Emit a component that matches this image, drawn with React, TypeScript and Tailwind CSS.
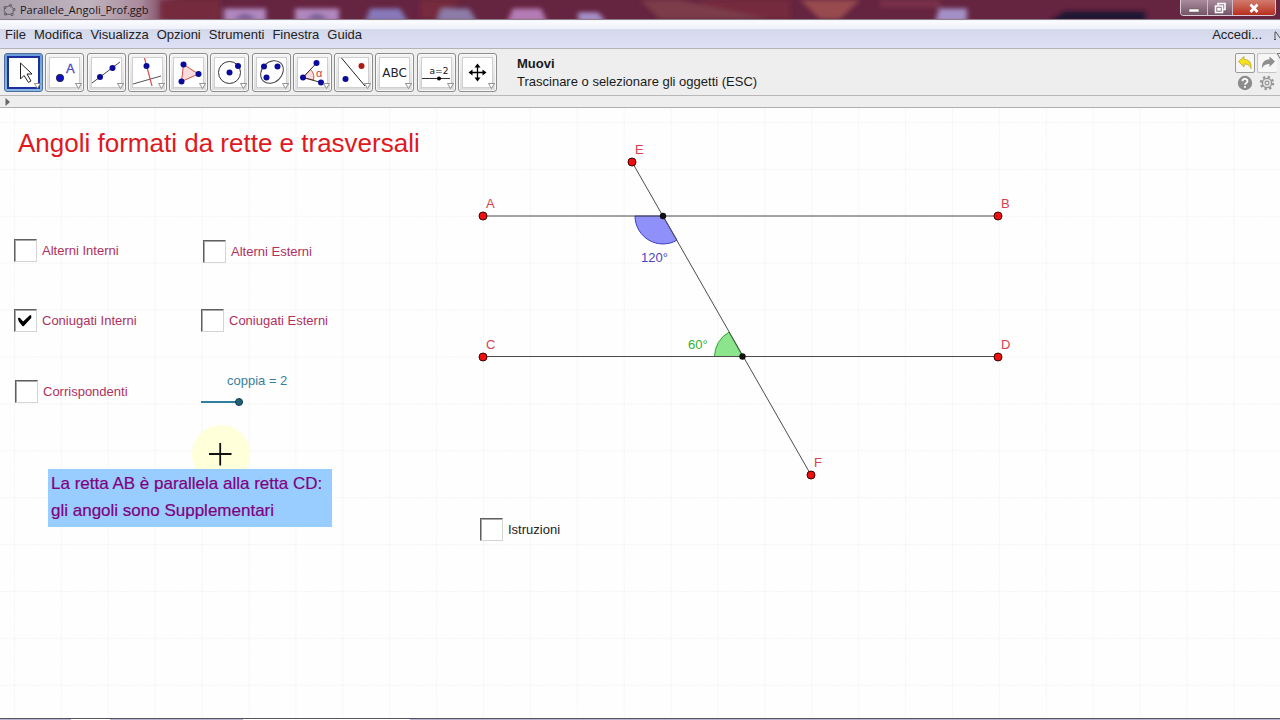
import { useState } from 'react'
import type { ReactNode } from 'react'

const BLUE = '#0b0b9a'

const Dot = ({ x, y, fill = BLUE, r = 3 }: { x: number; y: number; fill?: string; r?: number }) => (
  <circle cx={x} cy={y} r={r} fill={fill} />
)

const tools: { name: string; icon: ReactNode }[] = [
  {
    name: 'Muovi',
    icon: <path d="M11.5 5v16l3.5-3.500 4.500 7 2.500-1.500-4-7h5z" fill="#fff" stroke="#222" />,
  },
  {
    name: 'Punto',
    icon: (
      <>
        <circle cx="10" cy="20" r="3.700" fill="#1010c8" stroke="#222" strokeWidth="0.800" />
        <text x="16" y="15" fontSize="13" fill="#4a44c8" stroke="#4a44c8" strokeWidth="0.300">A</text>
      </>
    ),
  },
  {
    name: 'Retta',
    icon: (
      <>
        <path d="M0 25 28 4" stroke="#444" />
        <Dot x={8} y={19} />
        <Dot x={20.5} y={10} />
      </>
    ),
  },
  {
    name: 'Retta perpendicolare',
    icon: (
      <>
        <path d="M0 26 28 18" stroke="#555" />
        <path d="M11.500 0 19 28" stroke="#d8504c" strokeWidth="1.200" />
        <Dot x={13.5} y={8} />
      </>
    ),
  },
  {
    name: 'Poligono',
    icon: (
      <>
        <path d="M9.500 6.500 24.500 16 7.500 23.500z" fill="#fbdcdc" stroke="#d0504c" />
        <Dot x={9.5} y={6.5} />
        <Dot x={24.5} y={16} />
        <Dot x={7.5} y={23.5} />
      </>
    ),
  },
  {
    name: 'Circonferenza',
    icon: (
      <>
        <circle cx="14.500" cy="14.500" r="11" fill="none" stroke="#333" />
        <Dot x={14.5} y={14.5} />
        <Dot x={23} y={8} />
      </>
    ),
  },
  {
    name: 'Conica',
    icon: (
      <>
        <ellipse cx="15" cy="14" rx="12.500" ry="10" transform="rotate(-45 15 14)" fill="none" stroke="#444" />
        <Dot x={7} y={8.5} />
        <Dot x={20.5} y={8.5} />
        <Dot x={9.5} y={19.5} />
      </>
    ),
  },
  {
    name: 'Angolo',
    icon: (
      <>
        <path d="M5 19.500 12.500 11.500A11 11 0 0 1 15.500 22z" fill="#fbdcdc" stroke="#d0504c" />
        <path d="M18.500 5 5 19.500 23 24.500" fill="none" stroke="#333" />
        <Dot x={5} y={19.5} />
        <Dot x={18.5} y={5} />
        <Dot x={23} y={24.5} />
        <text x="18" y="19" fontSize="11" fill="#d0403c">α</text>
      </>
    ),
  },
  {
    name: 'Simmetria',
    icon: (
      <>
        <path d="M2.500 0 26 28" stroke="#222" />
        <Dot x={22.5} y={8} fill="#b01818" />
        <Dot x={6.5} y={21} />
      </>
    ),
  },
  {
    name: 'Testo',
    icon: (
      <text x="14.500" y="18.500" fontSize="12" textAnchor="middle" fill="#223" className="font-['DejaVu_Sans',sans-serif]">ABC</text>
    ),
  },
  {
    name: 'Slider',
    icon: (
      <>
        <text x="17" y="16" fontSize="9" textAnchor="middle" fill="#111" className="font-['DejaVu_Sans',sans-serif]">a=2</text>
        <path d="M0 20.500H28" stroke="#333" />
        <Dot x={17} y={20.5} r={2} fill="#000" />
      </>
    ),
  },
  {
    name: 'Muovi vista',
    icon: (
      <>
        <path d="M14.500 8v13M8 14.500h13" stroke="#000" strokeWidth="1.300" />
        <path d="M14.500 5.500 17.500 9.500h-6zM14.500 23.500 17.500 19.500h-6zM5.500 14.500 9.500 11.500v6zM23.500 14.500 19.500 11.500v6z" />
      </>
    ),
  },
]

const ToolButton = ({ name, active, onClick, children }: { name: string; active: boolean; onClick: () => void; children: ReactNode }) => (
  <button
    type="button"
    aria-label={name}
    onClick={onClick}
    className={
      active
        ? 'relative flex size-[39px] items-center justify-center rounded-[3px] border border-[#4d6f9c] bg-linear-to-b from-[#6d9fd6] to-[#8ab8e4]'
        : 'relative flex size-[39px] items-center justify-center rounded-[3px] border border-[#8c8c8c] bg-linear-to-b from-[#f4f4f4] to-[#dcdcdc] shadow-[inset_0_0_0_1px_#fafafa]'
    }
  >
    <span className={active ? 'block border-2 border-[#1b2f9e] bg-white' : 'block border border-[#cfcfcf] bg-white'}>
      <svg viewBox="0 0 29 29" className="block size-[29px] font-['Liberation_Sans',sans-serif]">
        {children}
      </svg>
    </span>
    <svg viewBox="0 0 7 6" className="absolute right-px bottom-0.5 h-[6px] w-[7px]">
      <path d="M.5.500h6L3.500 5.500z" fill="#fff" stroke="#777" strokeWidth="0.800" />
    </svg>
  </button>
)

const TitleBar = () => (
  <header className="relative flex h-5 items-start justify-between overflow-hidden border-b border-[#8d7f8c] bg-[#652440]">
    {/* desktop showing through the glass frame */}
    <svg className="absolute inset-0 h-full w-full" preserveAspectRatio="none" viewBox="0 0 1280 20">
      <defs>
        <filter id="glass" x="-20%" y="-50%" width="140%" height="200%">
          <feGaussianBlur stdDeviation="2.500" />
        </filter>
        <linearGradient id="haze">
          <stop offset="0" stopColor="#aba3ae" />
          <stop offset="0.500" stopColor="#c0b3bd" />
          <stop offset="0.780" stopColor="#a98a9c" />
          <stop offset="1" stopColor="#652440" />
        </linearGradient>
      </defs>
      <rect width="180" height="20" fill="url(#haze)" />
      <g filter="url(#glass)">
        <path d="M160 0h60v22h-60zM420 0h40l-20 20h-20zM700 0h90v20h-80z" fill="#76293c" />
        <path d="M640 0h40l90 20H660z" fill="#7c3c48" />
        <path d="M800 0h60l-20 20h-20z" fill="#984c50" />
        <path d="M880 0h60v8h-60z" fill="#7a3048" />
        <path d="M1065 12h80v10h-96z" fill="#1f1230" />
        <path d="M224 9h42v14h-42zM295 9h44v14h-44z" fill="#b088be" />
        <path d="M234 20q11-10 22 0zM306 20q11-10 22 0z" fill="#66508c" />
        <path d="M370 9h30l8 14h-43z" fill="#8678ba" />
        <path d="M441 9h28l8 14h-40z" fill="#8c7ca8" />
        <path d="M513 9h28l6 14h-40z" fill="#b47cb4" />
        <path d="M578 13h20l8 10h-28zM939 9h28v14h-32z" fill="#a490c8" />
      </g>
    </svg>
    <div className="relative flex h-5 items-center gap-1 pl-0.5">
      <svg viewBox="0 0 14 14" className="size-3.5" fill="none" stroke="#55505c">
        <path d="M3 4.500 8 2.500 12 6 10.500 11 4.500 11.500 2 8z" strokeWidth="0.800" />
        <g fill="#8d8994" strokeWidth="0.700">
          <circle cx="3" cy="4.500" r="1.200" />
          <circle cx="8.500" cy="2.500" r="1.200" />
          <circle cx="12" cy="6.500" r="1.200" />
          <circle cx="10" cy="11.500" r="1.200" />
          <circle cx="3.500" cy="11" r="1.200" />
        </g>
      </svg>
      <h1 className="font-['Open_Sans',sans-serif] text-[11px] text-[#1c1820]">Parallele_Angoli_Prof.ggb</h1>
    </div>
    <div className="relative mr-1 flex h-4 overflow-hidden rounded-b-[4px] border border-t-0 border-[#d8cdd6]">
      <button type="button" aria-label="Riduci" className="flex w-[27px] items-center justify-center border-r border-[#cdbcc8] bg-linear-to-b from-[#a98c9c] to-[#755568]">
        <svg viewBox="0 0 12 12" className="size-3"><path d="M1 7h10v3H1z" fill="#fff" stroke="#655" strokeWidth="0.500" /></svg>
      </button>
      <button type="button" aria-label="Ripristina" className="flex w-[25px] items-center justify-center border-r border-[#cdbcc8] bg-linear-to-b from-[#a98c9c] to-[#755568]">
        <svg viewBox="0 0 12 12" className="size-3" fill="none" stroke="#fff" strokeWidth="1.600"><path d="M4 3V1.500h7v6H9.500M1.500 4h7v6.500h-7zM4 6.500h2v1.500H4z" /></svg>
      </button>
      <button type="button" aria-label="Chiudi" className="flex w-[42px] items-center justify-center bg-linear-to-b from-[#d07a6e] to-[#b82c1c]">
        <svg viewBox="0 0 12 12" className="size-3" stroke="#fff" strokeWidth="2.600"><path d="M2.500 2.500 9.500 10M9.500 2.500 2.500 10" /></svg>
      </button>
    </div>
  </header>
)

const menus = ['File', 'Modifica', 'Visualizza', 'Opzioni', 'Strumenti', 'Finestra', 'Guida']

const MenuBar = () => (
  <nav className="flex h-7 items-center justify-between overflow-hidden border-b border-[#b4b4b8] bg-[linear-gradient(#fbfcff_0%,#eef1fa_28%,#d3d9ea_32%,#dfe0f6_100%)] pl-[5px] text-[13px] text-[#222]">
    <div className="flex gap-2">
      {menus.map((menu) => (
        <button type="button" key={menu}>{menu}</button>
      ))}
    </div>
    <div className="flex items-center gap-3">
      <button type="button">Accedi...</button>
      <svg viewBox="0 0 6 10" className="h-2.5 w-1.5" fill="none" stroke="#555"><path d="M0 9.500h2M1 9V2h1l4 6" /></svg>
    </div>
  </nav>
)

const Toolbar = () => {
  const [tool, setTool] = useState('Muovi')
  return (
    <div className="flex h-[47px] items-center justify-between border-b border-[#b8b8b8] bg-[#eeeeee] pl-1">
      <div className="flex items-center gap-5">
        <div className="flex w-[493px] justify-between">
          {tools.map(({ name, icon }) => (
            <ToolButton key={name} name={name} active={tool === name} onClick={() => setTool(name)}>
              {icon}
            </ToolButton>
          ))}
        </div>
        <div className="pt-0.5 text-[13px] leading-[18px] text-[#1a1a1a]">
          <p className="font-bold">Muovi</p>
          <p>Trascinare o selezionare gli oggetti (ESC)</p>
        </div>
      </div>
      <div className="flex items-start">
        <div className="grid grid-cols-2 items-center justify-items-center gap-x-0.5 gap-y-0.5">
          <button type="button" aria-label="Annulla" className="flex size-5 items-center justify-center rounded-xs border border-[#9a9a9a] bg-[#f6f6f6]">
            <svg viewBox="0 0 16 16" className="size-4"><path d="M1.500 6.500 7 1.500v3c5 0 7.500 3 7 9-1.500-3.500-3.500-4.500-7-4.500v3z" fill="#f6e21c" stroke="#b9a52c" strokeWidth="0.800" /></svg>
          </button>
          <button type="button" aria-label="Ripeti" className="flex size-5 items-center justify-center rounded-xs border border-r-0 border-[#c4c4c4] bg-[#f6f6f6]">
            <svg viewBox="0 0 16 16" className="size-4"><path d="M15 6.500 9.500 1.500v3c-5 0-8 3-7.500 9 1.500-3.500 4-4.500 7.500-4.500v3z" fill="#8e8e8e" /></svg>
          </button>
          <button type="button" aria-label="Guida">
            <svg viewBox="0 0 16 16" className="block size-4">
              <circle cx="8" cy="8" r="7.200" fill="#8c8c8c" />
              <path d="M5.500 6.300C5.500 3.200 10.500 3.200 10.500 6.200 10.500 8 8 8 8 9.800" fill="none" stroke="#fff" strokeWidth="1.800" />
              <circle cx="8" cy="12" r="1.100" fill="#fff" />
            </svg>
          </button>
          <button type="button" aria-label="Impostazioni">
            <svg viewBox="0 0 16 16" className="block size-4" fill="none" stroke="#969696">
              <circle cx="8" cy="8" r="6" strokeWidth="2.400" strokeDasharray="2.350" />
              <circle cx="8" cy="8" r="4.600" fill="#e2e2e2" strokeWidth="1.400" />
              <circle cx="8" cy="8" r="1.800" fill="#eee" strokeWidth="1.200" />
            </svg>
          </button>
        </div>
        <svg viewBox="0 0 3 8" className="h-2 w-[3px]"><path d="M0 .5h4M.5 1 4 7" fill="none" stroke="#777" /></svg>
      </div>
    </div>
  )
}

const checks = [
  { label: 'Alterni Interni', place: 'left-[14px] top-[131px]' },
  { label: 'Alterni Esterni', place: 'left-[203px] top-[132px]' },
  { label: 'Coniugati Interni', place: 'left-[14px] top-[201px]', on: true },
  { label: 'Coniugati Esterni', place: 'left-[201px] top-[201px]' },
  { label: 'Corrispondenti', place: 'left-[15px] top-[272px]' },
  { label: 'Istruzioni', place: 'left-[480px] top-[410px]', dark: true },
]

const CheckItem = ({ label, place, on = false, dark = false }: { label: string; place: string; on?: boolean; dark?: boolean }) => (
  <label className={`absolute flex items-center gap-[5px] text-[13px] ${dark ? 'text-[#222]' : 'text-[#b03060]'} ${place}`}>
    <span className="relative block size-[23px]">
      <input
        type="checkbox"
        defaultChecked={on}
        className="peer block size-[23px] appearance-none border border-t-[#606060] border-r-[#d4d4d4] border-b-[#d4d4d4] border-l-[#606060] bg-white shadow-[inset_1px_1px_0_#a8a8a8]"
      />
      <svg viewBox="0 0 24 24" className="pointer-events-none absolute inset-0 hidden size-[23px] peer-checked:block">
        <path d="M4 9.500 6 9 9.500 13 16.500 6.500 18 6.500V9.500L10 18H9L5 13z" />
      </svg>
    </span>
    {label}
  </label>
)

const points = [
  { name: 'A', x: 483, y: 108 },
  { name: 'B', x: 998, y: 108 },
  { name: 'C', x: 483, y: 249 },
  { name: 'D', x: 998, y: 249 },
  { name: 'E', x: 632, y: 54 },
  { name: 'F', x: 811, y: 367 },
]

const Figure = () => (
  <svg className="absolute inset-0 h-full w-full text-[13px]">
    <defs>
      <pattern id="grid" x="14" y="14" width="46.900" height="46.900" patternUnits="userSpaceOnUse">
        <path d="M.5 0V47M0 .5H47" stroke="#f4f4f4" strokeDasharray="2 1" />
      </pattern>
    </defs>
    <rect width="100%" height="100%" fill="url(#grid)" />
    <path d="M663 108H635A28 28 0 0 0 677 132.200z" fill="#9090fb" stroke="#3c3cc8" />
    <path d="M742.500 248.500H714.500A28 28 0 0 1 729 224.200z" fill="#8ce48c" stroke="#28a828" />
    <path d="M483 108H998M483 248.500H998M632 54 811 367" stroke="#4c4c4c" fill="none" />
    <circle cx="663" cy="108" r="3.200" fill="#111" />
    <circle cx="742.500" cy="248.500" r="3.200" fill="#111" />
    {points.map(({ name, x, y }) => (
      <g key={name}>
        <circle cx={x} cy={y} r="4" fill="#ee1010" stroke="#400" />
        <text x={x + 3} y={y - 8} fill="#d8404c">{name}</text>
      </g>
    ))}
    <text x="641" y="154" fill="#4a44c0">120°</text>
    <text x="688" y="241" fill="#30b030">60°</text>
  </svg>
)

const Canvas = () => (
  <main className="relative flex-1 overflow-hidden bg-[#fefefe]">
    <Figure />
    <h2 className="absolute top-[17px] left-[18px] text-[26px] leading-9 whitespace-nowrap text-[#e01820]">
      Angoli formati da rette e trasversali
    </h2>
    {checks.map((check) => (
      <CheckItem key={check.label} {...check} />
    ))}
    <div className="absolute top-[264px] left-[201px] text-[13px] leading-[18px] text-[#3a7f9c]">
      <label htmlFor="coppia" className="block pl-[26px]">coppia = 2</label>
      <input
        id="coppia"
        type="range"
        min={1}
        max={2}
        defaultValue={2}
        className="mt-2 block h-2 w-[42px] appearance-none bg-transparent [&::-webkit-slider-runnable-track]:h-0.5 [&::-webkit-slider-runnable-track]:bg-[#2f7f9f] [&::-webkit-slider-thumb]:-mt-[3px] [&::-webkit-slider-thumb]:size-2 [&::-webkit-slider-thumb]:appearance-none [&::-webkit-slider-thumb]:rounded-full [&::-webkit-slider-thumb]:border [&::-webkit-slider-thumb]:border-[#163c4c] [&::-webkit-slider-thumb]:bg-[#206078]"
      />
    </div>
    {/* mouse pointer with its highlight */}
    <svg viewBox="0 0 60 60" className="absolute top-[316px] left-[190px] size-[60px]">
      <circle cx="31" cy="30" r="29" fill="#ffffda" />
      <path d="M19 30h22.500M30.200 19v22.500" stroke="#111" strokeWidth="1.800" />
    </svg>
    <p className="absolute top-[361px] left-[48px] bg-[#99ccff] px-[3px] pt-px pb-[3px] text-[17px] leading-[27px] whitespace-nowrap text-[#800080] pr-[10px] [-webkit-text-stroke:0.2px_#800080]">
      La retta AB è parallela alla retta CD:
      <br />
      gli angoli sono Supplementari
    </p>
  </main>
)

const App = () => {
  return (
    <div className="flex min-h-screen flex-col bg-white font-['Liberation_Sans',Arial,sans-serif]">
      <TitleBar />
      <div className="h-px bg-[#f4f4f8]" />
      <MenuBar />
      <Toolbar />
      <div className="flex h-3 items-center border-b border-[#b0b0b0] bg-[#eeeeee] pl-[5px]">
        <svg viewBox="0 0 5 8" className="h-2 w-[5px]"><path d="M.5 0 5 4 .5 8z" fill="#666" /></svg>
      </div>
      <Canvas />
      <footer className="flex h-0.5 border-t border-[#55535f] bg-[#b8b4cc] pl-[71px]">
        <span className="mr-[133px] w-[39px] bg-white" />
        <span className="w-[167px] bg-white" />
      </footer>
    </div>
  )
}

export default App
